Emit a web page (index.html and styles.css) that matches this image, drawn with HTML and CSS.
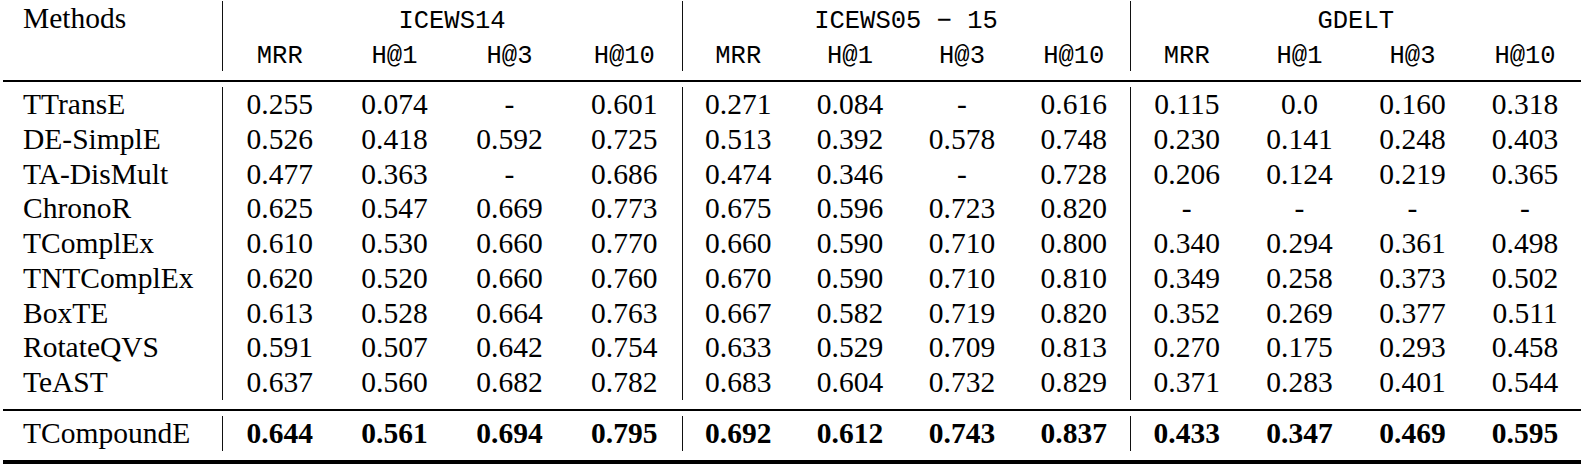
FILE: index.html
```html
<!DOCTYPE html>
<html lang="en">
<head>
<meta charset="utf-8">
<title>Results table</title>
<link rel="stylesheet" href="styles.css">
</head>
<body>
<table class="results">
  <colgroup>
    <col class="c-method">
    <col class="c-g1"><col class="c-g1"><col class="c-g1"><col class="c-g1">
    <col class="c-g2"><col class="c-g2"><col class="c-g2"><col class="c-g2">
    <col class="c-g3"><col class="c-g3"><col class="c-g3"><col class="c-g3b">
  </colgroup>
  <thead>
    <tr class="hrow">
      <th class="method sep">Methods</th>
      <th colspan="4" class="sep"><span class="tt">ICEWS14</span></th>
      <th colspan="4" class="sep"><span class="tt">ICEWS05 − 15</span></th>
      <th colspan="4"><span class="tt">GDELT</span></th>
    </tr>
    <tr class="hrow">
      <th class="method sep"></th>
      <th><span class="tt">MRR</span></th><th><span class="tt">H@1</span></th><th><span class="tt">H@3</span></th><th class="sep"><span class="tt">H@10</span></th>
      <th><span class="tt">MRR</span></th><th><span class="tt">H@1</span></th><th><span class="tt">H@3</span></th><th class="sep"><span class="tt">H@10</span></th>
      <th><span class="tt">MRR</span></th><th><span class="tt">H@1</span></th><th><span class="tt">H@3</span></th><th><span class="tt">H@10</span></th>
    </tr>
  </thead>
  <tbody>
    <tr class="gap gap-a rule-2"><td colspan="13"></td></tr>
    <tr class="gap gap-b"><td colspan="13"></td></tr>
    <tr class="drow"><td class="method sep">TTransE</td><td>0.255</td><td>0.074</td><td>-</td><td class="sep">0.601</td><td>0.271</td><td>0.084</td><td>-</td><td class="sep">0.616</td><td>0.115</td><td>0.0</td><td>0.160</td><td>0.318</td></tr>
    <tr class="drow"><td class="method sep">DE-SimplE</td><td>0.526</td><td>0.418</td><td>0.592</td><td class="sep">0.725</td><td>0.513</td><td>0.392</td><td>0.578</td><td class="sep">0.748</td><td>0.230</td><td>0.141</td><td>0.248</td><td>0.403</td></tr>
    <tr class="drow"><td class="method sep">TA-DisMult</td><td>0.477</td><td>0.363</td><td>-</td><td class="sep">0.686</td><td>0.474</td><td>0.346</td><td>-</td><td class="sep">0.728</td><td>0.206</td><td>0.124</td><td>0.219</td><td>0.365</td></tr>
    <tr class="drow"><td class="method sep">ChronoR</td><td>0.625</td><td>0.547</td><td>0.669</td><td class="sep">0.773</td><td>0.675</td><td>0.596</td><td>0.723</td><td class="sep">0.820</td><td>-</td><td>-</td><td>-</td><td>-</td></tr>
    <tr class="drow"><td class="method sep">TComplEx</td><td>0.610</td><td>0.530</td><td>0.660</td><td class="sep">0.770</td><td>0.660</td><td>0.590</td><td>0.710</td><td class="sep">0.800</td><td>0.340</td><td>0.294</td><td>0.361</td><td>0.498</td></tr>
    <tr class="drow"><td class="method sep">TNTComplEx</td><td>0.620</td><td>0.520</td><td>0.660</td><td class="sep">0.760</td><td>0.670</td><td>0.590</td><td>0.710</td><td class="sep">0.810</td><td>0.349</td><td>0.258</td><td>0.373</td><td>0.502</td></tr>
    <tr class="drow"><td class="method sep">BoxTE</td><td>0.613</td><td>0.528</td><td>0.664</td><td class="sep">0.763</td><td>0.667</td><td>0.582</td><td>0.719</td><td class="sep">0.820</td><td>0.352</td><td>0.269</td><td>0.377</td><td>0.511</td></tr>
    <tr class="drow"><td class="method sep">RotateQVS</td><td>0.591</td><td>0.507</td><td>0.642</td><td class="sep">0.754</td><td>0.633</td><td>0.529</td><td>0.709</td><td class="sep">0.813</td><td>0.270</td><td>0.175</td><td>0.293</td><td>0.458</td></tr>
    <tr class="drow"><td class="method sep">TeAST</td><td>0.637</td><td>0.560</td><td>0.682</td><td class="sep">0.782</td><td>0.683</td><td>0.604</td><td>0.732</td><td class="sep">0.829</td><td>0.371</td><td>0.283</td><td>0.401</td><td>0.544</td></tr>
    <tr class="gap gap-c rule-2"><td colspan="13"></td></tr>
    <tr class="gap gap-b"><td colspan="13"></td></tr>
    <tr class="drow best"><td class="method sep">TCompoundE</td><td>0.644</td><td>0.561</td><td>0.694</td><td class="sep">0.795</td><td>0.692</td><td>0.612</td><td>0.743</td><td class="sep">0.837</td><td>0.433</td><td>0.347</td><td>0.469</td><td>0.595</td></tr>
    <tr class="gap gap-a rule-4"><td colspan="13"></td></tr>
  </tbody>
</table>
</body>
</html>
```

FILE: styles.css
```css
html, body {
  margin: 0;
  padding: 0;
  background: #ffffff;
}

.results {
  border-collapse: collapse;
  table-layout: fixed;
  width: 1578px;
  margin: 1px 0 0 3px;
  font-family: "Liberation Serif", "Times New Roman", serif;
  font-size: 29.5px;
  color: #000000;
}

.c-method { width: 219px; }
.c-g1 { width: 115px; }
.c-g2 { width: 112px; }
.c-g3 { width: 113px; }
.c-g3b { width: 112px; }

.results th,
.results td {
  padding: 0;
  font-weight: normal;
  text-align: center;
  vertical-align: middle;
  white-space: nowrap;
}

.results .method {
  text-align: left;
  padding-left: 20px;
}

.results .sep {
  border-right: 1px solid #111111;
}

.hrow th {
  height: 35px;
  line-height: 35px;
}

.tt {
  font-family: "Liberation Mono", "Courier New", monospace;
  font-size: 25.5px;
  line-height: 1;
}

.drow td {
  height: 34.75px;
  line-height: 34.75px;
}

.best td:not(.method) {
  font-weight: bold;
}

.gap td {
  padding: 0;
  font-size: 0;
  line-height: 0;
}

.gap-a td { height: 9px; }
.gap-b td { height: 5px; }
.gap-c td { height: 9.25px; }

.rule-2 td { border-bottom: 2px solid #000000; }
.rule-4 td { border-bottom: 4px solid #000000; }
```
